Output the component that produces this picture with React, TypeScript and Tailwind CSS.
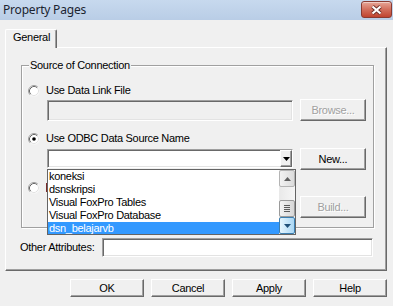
import React from "react";

// classic 3D edges
const sunken =
  "border border-t-[#a0a0a0] border-l-[#a0a0a0] border-b-white border-r-white shadow-[inset_1px_1px_0_#696969,inset_-1px_-1px_0_#e3e3e3]";
const raised =
  "border border-t-white border-l-white border-b-[#696969] border-r-[#696969] shadow-[inset_-1px_-1px_0_#a0a0a0]";
const disabledText = "text-[#a0a0a0] [text-shadow:1px_1px_0_#fff]";

const Radio = ({ checked }: { checked?: boolean }) => (
  <svg width="12" height="12" viewBox="0 0 12 12" className="shrink-0">
    <circle cx="6" cy="6" r="5.5" fill="#fff" />
    <path d="M2.11 9.89 A5.5 5.5 0 0 1 9.89 2.11" stroke="#a0a0a0" fill="none" />
    <path d="M9.89 2.11 A5.5 5.5 0 0 1 2.11 9.89" stroke="#f4f4f4" fill="none" />
    <path d="M2.82 9.18 A4.5 4.5 0 0 1 9.18 2.82" stroke="#696969" fill="none" />
    <path d="M9.18 2.82 A4.5 4.5 0 0 1 2.82 9.18" stroke="#e3e3e3" fill="none" />
    {checked && <circle cx="6" cy="6" r="1.8" fill="#000" />}
  </svg>
);

const Btn = ({ label, disabled, className = "" }: { label: string; disabled?: boolean; className?: string }) => (
  <button
    type="button"
    className={`flex items-center justify-center bg-[#f0f0f0] ${raised} ${disabled ? disabledText : "text-black"} ${className}`}
  >
    {label}
  </button>
);

const CloseButton = () => (
  <div className="mt-[1px] mr-[1px] w-[31px] h-[17px] rounded-[3px] border border-[#8a3b32] bg-gradient-to-b from-[#e6a698] via-[#d26e5c] to-[#c0432f] flex items-center justify-center shadow-[inset_0_1px_0_rgba(255,255,255,0.45)]">
    <svg width="13" height="10" viewBox="0 0 13 10">
      <path d="M2.5 1.5 L10.5 8.5 M10.5 1.5 L2.5 8.5" stroke="#6b2c25" strokeWidth="3.8" />
      <path d="M2.5 1.5 L10.5 8.5 M10.5 1.5 L2.5 8.5" stroke="#fff" strokeWidth="2.2" />
    </svg>
  </div>
);

const ScrollBar = () => (
  <div className="w-[16px] flex flex-col bg-gradient-to-r from-[#e9e9e9] to-[#f6f6f6]">
    <div className="h-[17px] rounded-[2px] border border-[#b4b4b4] bg-gradient-to-r from-[#f2f2f2] to-[#dcdcdc] flex items-center justify-center">
      <svg width="7" height="4" viewBox="0 0 7 4">
        <path d="M0 4 L3.5 0 L7 4 Z" fill="#606060" />
      </svg>
    </div>
    <div className="flex-1 flex flex-col">
      <div className="mt-auto h-[17px] rounded-[2px] border border-[#9a9a9a] bg-gradient-to-r from-[#f3f3f3] to-[#d7d7d7] flex flex-col items-center justify-center gap-[1px]">
        <div className="w-[6px] h-[1px] bg-[#5a5a5a]" />
        <div className="w-[6px] h-[1px] bg-[#5a5a5a]" />
        <div className="w-[6px] h-[1px] bg-[#5a5a5a]" />
        <div className="w-[6px] h-[1px] bg-[#5a5a5a]" />
      </div>
    </div>
    <div className="h-[17px] rounded-[2px] border border-[#3c7fb1] bg-gradient-to-r from-[#e6f5fd] to-[#a9d7f5] flex items-center justify-center">
      <svg width="7" height="4" viewBox="0 0 7 4">
        <path d="M0 0 L7 0 L3.5 4 Z" fill="#1f4f78" />
      </svg>
    </div>
  </div>
);

const dsnItems = ["koneksi", "dsnskripsi", "Visual FoxPro Tables", "Visual FoxPro Database", "dsn_belajarvb"];

export default function App() {
  return (
    <div className="w-[393px] h-[306px] overflow-hidden bg-[#f0f0f0] text-black text-[11px] leading-[13px] tracking-[-0.3px] font-['Liberation_Sans',Arial,sans-serif]">
      {/* Title bar */}
      <div className="h-[20px] flex items-start justify-between bg-gradient-to-b from-[#c7d9ee] to-[#b9cde6]">
        <span className="pl-[3px] pt-[1px] text-[12px] leading-[17px] tracking-[-0.2px] text-[#1b2430] font-['Noto_Sans',sans-serif]">
          Property Pages
        </span>
        <CloseButton />
      </div>

      {/* Tab */}
      <div className="relative z-10 ml-[5px] mt-[9px] -mb-px w-[52px] h-[19px] pl-[7px] pt-[1px] bg-[#f0f0f0] border-t border-l border-r border-t-white border-l-white border-r-[#696969] rounded-t-[2px] shadow-[inset_-1px_0_0_#a0a0a0]">
        General
      </div>

      {/* Tab panel */}
      <div className="ml-[5px] w-[382px] h-[224px] border border-t-white border-l-white border-r-[#696969] border-b-[#696969] shadow-[inset_-1px_-1px_0_#a0a0a0] flex flex-col">
        {/* Group box */}
        <div className="relative ml-[15px] mt-[17px] w-[353px] h-[163px] border border-[#a0a0a0] shadow-[inset_1px_1px_0_#fff,1px_1px_0_#fff] flex flex-col">
          <span className="-mt-[7px] ml-[7px] w-fit px-[1px] bg-[#f0f0f0]">Source of Connection</span>

          <div className="mt-[12px] ml-[6px] h-[13px] flex items-center gap-[6px]">
            <Radio />
            <span>Use Data Link File</span>
          </div>
          <div className="mt-[2px] ml-[25px] flex items-start gap-[7px]">
            <div className={`mt-[1px] w-[246px] h-[21px] bg-[#f0f0f0] ${sunken}`} />
            <Btn label="Browse..." disabled className="w-[66px] h-[22px]" />
          </div>

          <div className="mt-[11px] ml-[6px] h-[13px] flex items-center gap-[6px]">
            <Radio checked />
            <span>Use ODBC Data Source Name</span>
          </div>
          <div className="mt-[3px] ml-[25px] flex items-start gap-[7px]">
            <div className={`mt-[1px] w-[246px] h-[19px] bg-white flex justify-end ${sunken}`}>
              <div className={`w-[12px] h-[17px] bg-[#f0f0f0] flex items-center justify-center ${raised}`}>
                <svg width="7" height="4" viewBox="0 0 7 4">
                  <path d="M0 0 L7 0 L3.5 4 Z" fill="#000" />
                </svg>
              </div>
            </div>
            <Btn label="New..." className="w-[66px] h-[22px]" />
          </div>

          {/* third option, its label is covered by the open list; only the edge of its first letter peeks out */}
          <div className="mt-[11px] ml-[6px] h-[13px] flex items-center gap-[6px]">
            <Radio />
            <div className="w-[2px] h-[9px] bg-[#7a2a2a]" />
          </div>
          <div className="mt-[2px] ml-[25px] flex items-start gap-[7px]">
            <div className={`mt-[1px] w-[246px] h-[21px] bg-[#f0f0f0] ${sunken}`} />
            <Btn label="Build..." disabled className="w-[66px] h-[22px]" />
          </div>

          {/* Open dropdown list */}
          <div className="absolute z-20 left-[25px] top-[103px] w-[249px] h-[66px] border border-[#646464] bg-white flex overflow-hidden">
            <div className="flex-1 flex flex-col">
              {dsnItems.map((item, i) => (
                <div
                  key={item}
                  className={`h-[13px] shrink-0 pl-[1px] whitespace-nowrap ${
                    i === dsnItems.length - 1 ? "bg-[#3399ff] text-white" : ""
                  }`}
                >
                  {item}
                </div>
              ))}
            </div>
            <ScrollBar />
          </div>
        </div>

        {/* Other attributes */}
        <div className="mt-[10px] ml-[14px] flex items-center">
          <span className="w-[82px]">Other Attributes:</span>
          <div className={`w-[271px] h-[19px] bg-white ${sunken}`} />
        </div>
      </div>

      {/* Dialog buttons */}
      <div className="mt-[8px] pr-[6px] flex justify-end gap-[7px]">
        <Btn label="OK" className="w-[74px] h-[18px]" />
        <Btn label="Cancel" className="w-[74px] h-[18px]" />
        <Btn label="Apply" className="w-[74px] h-[18px]" />
        <Btn label="Help" className="w-[74px] h-[18px]" />
      </div>
    </div>
  );
}
